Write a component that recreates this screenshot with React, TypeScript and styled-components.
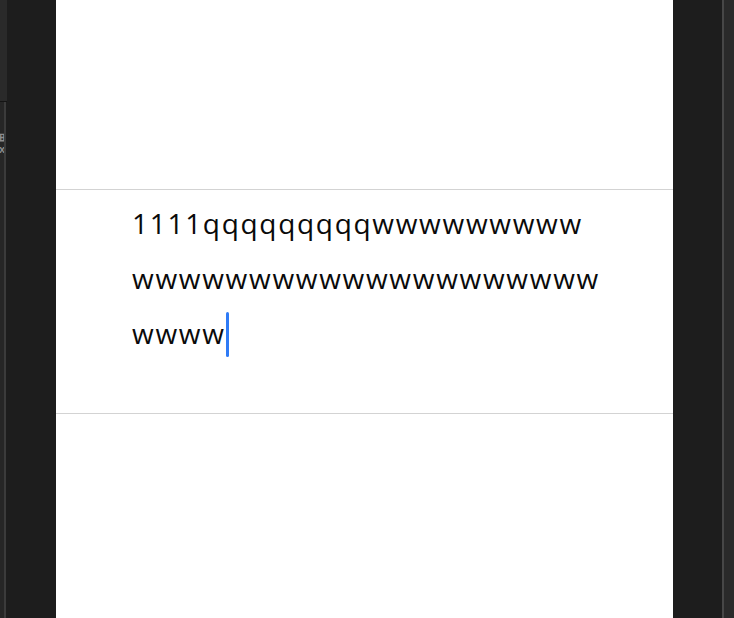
import React from "react";
import styled, { createGlobalStyle } from "styled-components";

const GlobalStyle = createGlobalStyle`
  html, body {
    margin: 0;
    padding: 0;
    background: #1d1d1d;
    height: 100%;
    overflow: hidden;
  }
  #root {
    height: 100%;
  }
`;

const Screen = styled.div`
  display: flex;
  height: 618px;
  width: 734px;
  background: #1d1d1d;
`;

const LeftRail = styled.div`
  width: 56px;
  display: flex;
  flex-direction: column;
`;

const RailTab = styled.div`
  width: 7px;
  height: 101px;
  background: #2a2a2a;
  border-bottom: 1px solid #141414;
`;

const RailTrack = styled.div`
  flex: 1;
  width: 4px;
  background: #262626;
  border-right: 2px solid #3b3b3b;
  overflow: hidden;
  padding-top: 29px;
`;

const RailLabel = styled.div`
  font-family: "Liberation Sans", sans-serif;
  font-size: 11px;
  line-height: 12px;
  font-weight: bold;
  color: #8c8c8c;
  direction: rtl;
  white-space: nowrap;
  width: 5px;
  overflow: hidden;
`;

const Page = styled.div`
  width: 617px;
  background: #ffffff;
  display: flex;
  flex-direction: column;
`;

const Blank = styled.div<{ $h: number }>`
  height: ${(p) => p.$h}px;
  flex-shrink: 0;
`;

const Editor = styled.div`
  height: 217px;
  border-top: 1px solid #d3d3d3;
  border-bottom: 1px solid #d3d3d3;
  padding: 6px 0 0 76px;
  box-sizing: content-box;
`;

const Text = styled.div`
  width: 470px;
  font-family: "Open Sans", Inter, sans-serif;
  font-size: 28px;
  letter-spacing: 1.7px;
  line-height: 55px;
  color: #0a0a0a;
  word-break: break-all;
`;

const Caret = styled.span`
  display: inline-block;
  width: 3px;
  height: 45px;
  margin-left: 0;
  border-radius: 1.5px;
  background: #2f7bf6;
  vertical-align: -13px;
`;

const RightRail = styled.div`
  flex: 1;
  display: flex;
`;

const Gutter = styled.div`
  width: 49px;
  background: #1d1d1d;
`;

const Divider = styled.div`
  width: 2px;
  background: #474747;
`;

const SidePanel = styled.div`
  flex: 1;
  background: #2a2a2a;
`;

export default function App() {
  const value = "1111qqqqqqqqqwwwwwwwww" + "wwwwwwwwwwwwwwwwwwww" + "wwww";
  return (
    <>
      <GlobalStyle />
      <Screen>
        <LeftRail>
          <RailTab />
          <RailTrack>
            <RailLabel>⊞</RailLabel>
            <RailLabel>x</RailLabel>
          </RailTrack>
        </LeftRail>
        <Page>
          <Blank $h={189} />
          <Editor>
            <Text>
              {value}
              <Caret />
            </Text>
          </Editor>
        </Page>
        <RightRail>
          <Gutter />
          <Divider />
          <SidePanel />
        </RightRail>
      </Screen>
    </>
  );
}
